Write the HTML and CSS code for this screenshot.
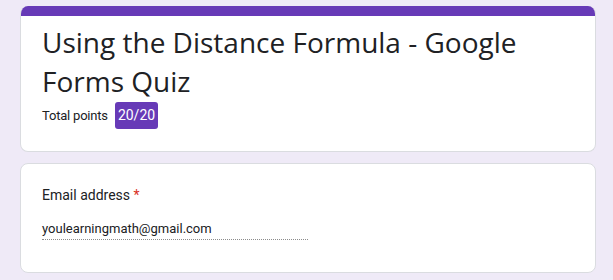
FILE: index.html
```html
<!DOCTYPE html>
<html>
<head>
<meta charset="utf-8">
<link rel="stylesheet" href="styles.css">
</head>
<body>
<div class="card header-card">
  <div class="bar"></div>
  <div class="header-body">
    <h1 class="title">Using the Distance Formula - Google Forms Quiz</h1>
    <div class="points-row">
      <span class="points-label">Total points</span>
      <span class="badge">20/20</span>
    </div>
  </div>
</div>
<div class="card field-card">
  <div class="field-label">Email address <span class="req">*</span></div>
  <div class="field-input"><span class="field-value">youlearningmath@gmail.com</span></div>
</div>
</body>
</html>
```
FILE: styles.css
```css
html, body {
  background: #efeaf7;
}
body {
  margin: 6px 17px 0 20px;
  font-family: Roboto, "Liberation Sans", Arial, sans-serif;
  color: #202124;
}
.card {
  background: #fff;
  border: 1px solid #dadce0;
  border-radius: 8px;
  overflow: hidden;
}
.header-card {
  border-top: none;
}
.bar {
  height: 10px;
  background: #673ab7;
}
.header-body {
  padding: 7px 21px 22px 21px;
}
.title {
  margin: 0;
  font-family: "Open Sans", Roboto, sans-serif;
  font-weight: 400;
  font-size: 28px;
  line-height: 39px;
  color: #202124;
}
.points-row {
  display: flex;
  align-items: center;
  gap: 7px;
  height: 27px;
  margin-top: 1px;
}
.points-label {
  font-size: 13px;
  letter-spacing: -0.2px;
  color: #202124;
}
.badge {
  background: #673ab7;
  color: #fff;
  font-size: 14px;
  font-weight: 400;
  border-radius: 3px;
  height: 27px;
  line-height: 27px;
  padding: 0 3px;
}
.field-card {
  margin-top: 11px;
  padding: 19px 21px 32px 21px;
}
.field-label {
  font-size: 14px;
  line-height: 24px;
}
.req {
  color: #d93025;
}
.field-input {
  margin-top: 12px;
  width: 266px;
  border-bottom: 1px dotted rgba(0,0,0,0.45);
}
.field-value {
  display: block;
  font-size: 13px;
  line-height: 20px;
}
```
